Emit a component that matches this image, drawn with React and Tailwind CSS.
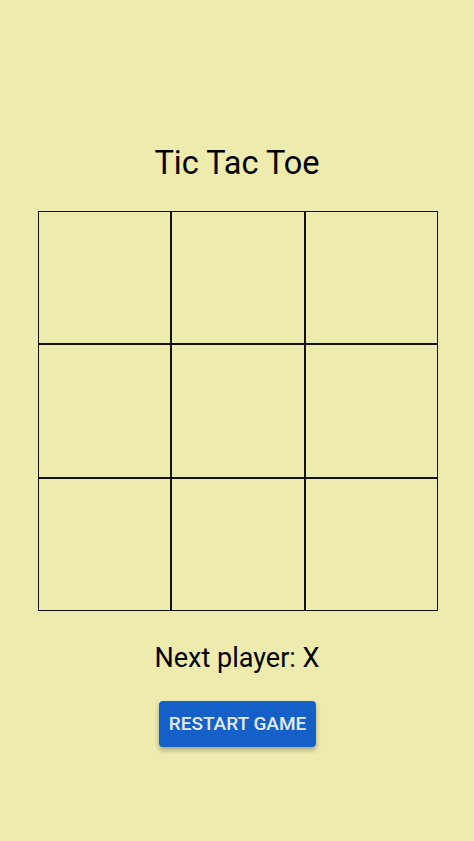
import React, { useState } from "react";

function calcWinner(sq) {
  const lines = [
    [0, 1, 2], [3, 4, 5], [6, 7, 8],
    [0, 3, 6], [1, 4, 7], [2, 5, 8],
    [0, 4, 8], [2, 4, 6],
  ];
  for (const [a, b, c] of lines) {
    if (sq[a] && sq[a] === sq[b] && sq[a] === sq[c]) return sq[a];
  }
  return null;
}

export default function App() {
  const [squares, setSquares] = useState(Array(9).fill(null));
  const [xNext, setXNext] = useState(true);

  const winner = calcWinner(squares);

  const play = (i) => {
    if (squares[i] || winner) return;
    const next = squares.slice();
    next[i] = xNext ? "X" : "O";
    setSquares(next);
    setXNext(!xNext);
  };

  const restart = () => {
    setSquares(Array(9).fill(null));
    setXNext(true);
  };

  const status = winner ? `Winner: ${winner}` : `Next player: ${xNext ? "X" : "O"}`;

  return (
    <div
      className="min-h-screen w-full bg-[#edebae] flex flex-col items-center pt-[144px] text-black"
      style={{ fontFamily: "Roboto, 'Liberation Sans', sans-serif" }}
    >
      <h1 className="text-[32.5px] leading-[38px] font-normal">Tic Tac Toe</h1>

      <div className="mt-[29px] ml-[2px] grid grid-cols-3 w-[400px] h-[400px]">
        {squares.map((v, i) => (
          <button
            key={i}
            onClick={() => play(i)}
            className="border-[1.5px] border-[#111] flex items-center justify-center text-[64px] leading-none"
          >
            {v}
          </button>
        ))}
      </div>

      <div className="mt-[31px] text-[27px] leading-[32px]">{status}</div>

      <button
        onClick={restart}
        className="mt-[27px] ml-[1px] w-[157px] h-[46px] rounded bg-[#1560c8] text-[#e3eaf6] text-[19px] font-medium uppercase shadow-[0_3px_5px_rgba(0,0,0,0.3)]"
      >
        Restart Game
      </button>
    </div>
  );
}
